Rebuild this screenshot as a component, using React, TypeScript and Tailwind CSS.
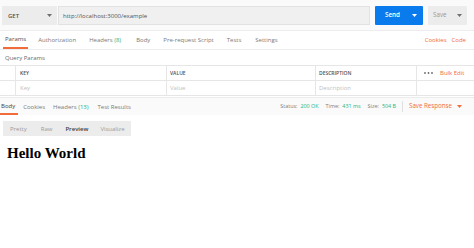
import React from "react";

const Caret = ({ className = "" }: { className?: string }) => (
  <svg width="5" height="3" viewBox="0 0 5 3" className={className}>
    <path d="M0 0 L5 0 L2.5 3 Z" fill="currentColor" />
  </svg>
);

const Dots = () => (
  <svg width="9" height="2" viewBox="0 0 9 2">
    <circle cx="1" cy="1" r="0.9" fill="#6a6a6a" />
    <circle cx="4.5" cy="1" r="0.9" fill="#6a6a6a" />
    <circle cx="8" cy="1" r="0.9" fill="#6a6a6a" />
  </svg>
);

export default function App() {
  return (
    <div className="w-[474px] h-[248px] bg-white overflow-hidden font-['Open_Sans',sans-serif] text-[6px] leading-none text-[#7a7a7a]">
      {/* top url bar */}
      <div className="h-[31px] bg-[#fafafa] border-b border-[#ededed] flex items-start pt-[6px] pl-[2px]">
        <div className="w-[55px] h-[19px] bg-[#ececec] flex items-center justify-between pl-[6px] pr-[5px] text-[#505050] font-semibold">
          <span>GET</span>
          <Caret className="text-[#707070]" />
        </div>
        <div className="ml-[1px] w-[312px] h-[19px] bg-[#f0f0f0] border border-[#e2e2e2] flex items-center pl-[4px] text-[#505050]">
          http://localhost:3000/example
        </div>
        <div className="ml-[5px] w-[48px] h-[19px] bg-[#097bed] rounded-[1px] flex items-center justify-between pl-[10px] pr-[6px] text-white font-semibold text-[6.3px]">
          <span>Send</span>
          <Caret />
        </div>
        <div className="ml-[5px] w-[39px] h-[19px] bg-[#ececec] rounded-[1px] flex items-center justify-between pl-[5px] pr-[5px] text-[#9a9a9a] text-[6.3px]">
          <span>Save</span>
          <Caret className="text-[#707070]" />
        </div>
      </div>

      {/* request tabs */}
      <div className="h-[19px] flex items-stretch border-b border-[#ededed] pl-[3px] pr-[8px]">
        <div className="flex items-center px-[2px] border-b-2 border-[#f26b3a] text-[#505050]">Params</div>
        <div className="flex items-center ml-[10px]">Authorization</div>
        <div className="flex items-center ml-[13px]">
          Headers&nbsp;<span className="text-[#26b47f]">(8)</span>
        </div>
        <div className="flex items-center ml-[15px]">Body</div>
        <div className="flex items-center ml-[13px]">Pre-request Script</div>
        <div className="flex items-center ml-[13px]">Tests</div>
        <div className="flex items-center ml-[14px]">Settings</div>
        <div className="flex-1" />
        <div className="flex items-center text-[#f26b3a]">Cookies</div>
        <div className="flex items-center ml-[5px] text-[#f26b3a]">Code</div>
      </div>

      {/* query params */}
      <div className="h-[15px] flex items-center pl-[5px] text-[#6a6a6a]">Query Params</div>

      {/* table */}
      <div className="border-t border-[#e6e6e6]">
        <div className="h-[15px] flex border-b border-[#e6e6e6] text-[#505050] font-semibold text-[5px]">
          <div className="w-[16px] border-r border-[#e6e6e6]" />
          <div className="w-[151px] border-r border-[#e6e6e6] flex items-center pl-[4px]">KEY</div>
          <div className="w-[149px] border-r border-[#e6e6e6] flex items-center pl-[3px]">VALUE</div>
          <div className="w-[101px] border-r border-[#e6e6e6] flex items-center pl-[3px]">DESCRIPTION</div>
          <div className="w-[22px] flex items-center justify-center">
            <Dots />
          </div>
          <div className="flex-1 flex items-center pl-[1px] text-[#f26b3a] font-normal text-[6px]">Bulk Edit</div>
        </div>
        <div className="h-[15px] flex border-b border-[#e6e6e6] text-[#c0c0c0]">
          <div className="w-[16px] border-r border-[#e6e6e6]" />
          <div className="w-[151px] border-r border-[#e6e6e6] flex items-center pl-[4px]">Key</div>
          <div className="w-[149px] border-r border-[#e6e6e6] flex items-center pl-[3px]">Value</div>
          <div className="w-[101px] border-r border-[#e6e6e6] flex items-center pl-[3px]">Description</div>
          <div className="flex-1" />
        </div>
      </div>

      {/* response bar */}
      <div className="mt-[1px] h-[18px] bg-[#fafafa] border-t border-[#ececec] flex items-stretch pr-[12px]">
        <div className="flex items-center pl-[1px] pr-[3px] border-b-2 border-[#f26b3a] text-[#404040]">Body</div>
        <div className="flex items-center ml-[5px]">Cookies</div>
        <div className="flex items-center ml-[8px]">
          Headers&nbsp;<span className="text-[#26b47f]">(13)</span>
        </div>
        <div className="flex items-center ml-[9px]">Test Results</div>
        <div className="flex-1" />
        <div className="flex items-center gap-[3px] text-[5.4px]">
          <span>Status:</span>
          <span className="text-[#26b47f]">200 OK</span>
          <span className="ml-[4px]">Time:</span>
          <span className="text-[#26b47f]">431 ms</span>
          <span className="ml-[4px]">Size:</span>
          <span className="text-[#26b47f]">504 B</span>
        </div>
        <div className="my-[3px] ml-[6px] w-px bg-[#e0e0e0]" />
        <div className="flex items-center ml-[6px] gap-[5px] text-[#f26b3a] text-[6.2px]">
          <span>Save Response</span>
          <Caret />
        </div>
      </div>

      {/* sub tabs */}
      <div className="pt-[6px] pl-[3px]">
        <div className="w-[128px] h-[15px] bg-[#ececec] flex items-center text-[#9a9a9a]">
          <span className="ml-[7px]">Pretty</span>
          <span className="ml-[14px]">Raw</span>
          <span className="ml-[13px] text-[#404040] font-semibold">Preview</span>
          <span className="ml-[12px]">Visualize</span>
        </div>
      </div>

      {/* body */}
      <div className="pl-[7px] pt-[8px] font-['Liberation_Serif',serif] font-bold text-[15px] text-black leading-[18px]">
        Hello World
      </div>
    </div>
  );
}
